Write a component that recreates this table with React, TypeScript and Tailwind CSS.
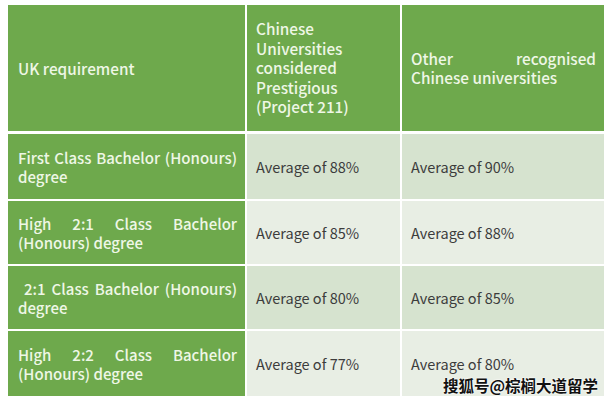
import React from 'react';

const rows = [
  { l1: 'First Class Bachelor (Honours)', l2: 'degree', p211: '88', other: '90' },
  { l1: 'High 2:1 Class Bachelor', l2: '(Honours) degree', p211: '85', other: '88' },
  { l1: '\u00a02:1 Class Bachelor (Honours)', l2: 'degree', p211: '80', other: '85' },
  { l1: 'High 2:2 Class Bachelor', l2: '(Honours) degree', p211: '77', other: '80' },
];

const cjk = { fontFamily: '"Noto Sans CJK SC", "Noto Sans", sans-serif' };

export default function App() {
  return (
    <div className="relative w-[612px] h-[405px] bg-white overflow-hidden">
      <div
        className="ml-[8px] mt-[5px] grid grid-cols-[237px_153px_202px] grid-rows-[127px_65px_63px_63px_65px] gap-x-[2px] gap-y-[2px]"
        style={cjk}
      >
        {/* header */}
        <div className="bg-[#6ea94c] text-[#eef7e6] text-[15.3px] font-medium flex items-center pl-[10px] pr-[9px] mb-[1px]">
          UK requirement
        </div>
        <div className="bg-[#6ea94c] text-[#eef7e6] text-[15.3px] font-medium leading-[19.5px] flex items-center pl-[9px] pr-[9px] mb-[1px]">
          <div>
            Chinese<br />Universities<br />considered<br />Prestigious<br />(Project 211)
          </div>
        </div>
        <div className="bg-[#6ea94c] text-[#eef7e6] text-[15.3px] font-medium leading-[19px] flex items-center pl-[9px] pr-[8px] mb-[1px]">
          <div className="w-full">
            <p className="text-justify [text-align-last:justify]">Other recognised</p>
            <p>Chinese universities</p>
          </div>
        </div>

        {rows.map((r, i) => {
          const bg = i % 2 === 0 ? 'bg-[#d6e3cf]' : 'bg-[#e8eee4]';
          return (
            <React.Fragment key={i}>
              <div className="bg-[#6ea94c] text-[#eef7e6] text-[15px] font-medium leading-[19px] flex items-center pl-[10px] pr-[8px]">
                <div className="w-full">
                  <p className="whitespace-nowrap text-justify [text-align-last:justify]">{r.l1}</p>
                  <p>{r.l2}</p>
                </div>
              </div>
              <div className={`${bg} text-[#3c3c3c] text-[14.5px] flex items-center pl-[9px]`}>
                Average of {r.p211}%
              </div>
              <div className={`${bg} text-[#3c3c3c] text-[14.5px] flex items-center pl-[9px]`}>
                Average of {r.other}%
              </div>
            </React.Fragment>
          );
        })}
      </div>

      {/* watermark */}
      <div
        className="absolute left-[443px] top-[373px] text-[15.5px] leading-[24px] font-bold text-[#111] whitespace-nowrap [text-shadow:0_0_2px_#fff,0_0_2px_#fff]"
        style={cjk}
      >
        搜狐号@棕榈大道留学
      </div>
    </div>
  );
}
